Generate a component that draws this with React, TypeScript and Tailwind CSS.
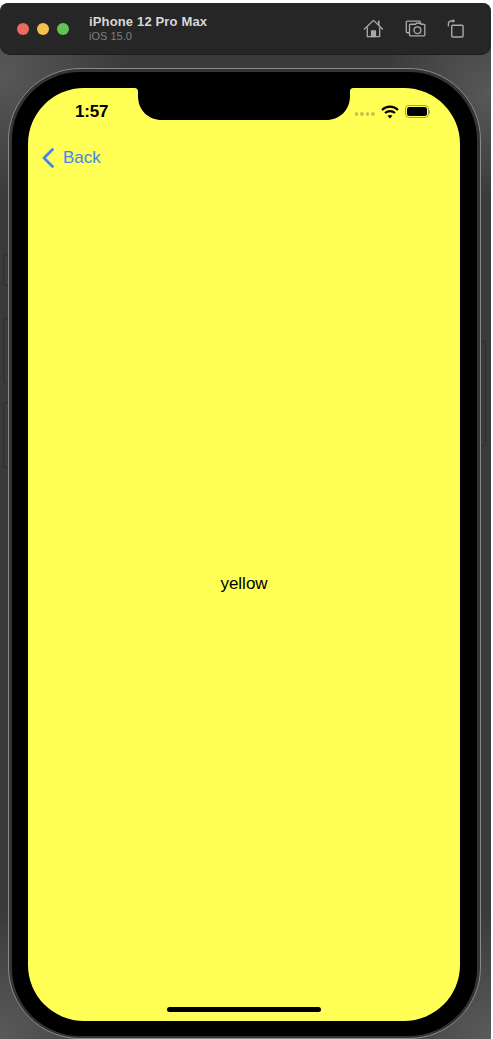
export default function App() {
  return (
    <div className="w-[493px] h-[1039px] bg-white overflow-hidden pt-[3px] font-['Liberation_Sans',sans-serif]">
      <div className="w-[491px] h-[1036px] flex flex-col overflow-hidden rounded-t-[8px] bg-[#3a3a3a] bg-[radial-gradient(circle_at_0px_70px,#585858_0,#3a3a3a_130px,transparent_131px),radial-gradient(circle_at_491px_90px,#585858_0,#3a3a3a_110px,transparent_111px),radial-gradient(circle_at_491px_1036px,#5a5a5a_0,#3a3a3a_130px,transparent_131px),radial-gradient(circle_at_0px_1036px,#5a5a5a_0,#3a3a3a_130px,transparent_131px)]">
        <header className="h-[52px] shrink-0 bg-[#262626] rounded-b-[10px] rounded-t-[8px] border-b border-[#1d1d1d] flex items-center pl-[17px] pr-[27px]">
          <div className="flex gap-[8px] w-[72px] shrink-0">
            <span className="w-[12px] h-[12px] rounded-full bg-[#ec6a5e]" />
            <span className="w-[12px] h-[12px] rounded-full bg-[#f4bf4f]" />
            <span className="w-[12px] h-[12px] rounded-full bg-[#61c554]" />
          </div>
          <div className="flex flex-col flex-1 -mt-[1px]">
            <span className="text-[13px] leading-[16px] font-bold text-[#d8d8d8] tracking-[0.15px]">iPhone 12 Pro Max</span>
            <span className="text-[11px] leading-[13px] text-[#808080]">iOS 15.0</span>
          </div>
          <div className="flex items-center gap-[21px] text-[#a9a9a9]">
            <svg width="21" height="21" viewBox="0 0 22 22" fill="none" stroke="currentColor" strokeWidth="1.4" strokeLinejoin="round" strokeLinecap="round">
              <path d="M1.5 11.5 L11 2.5 L20.5 11.5" />
              <path d="M16.5 7.5 V3.5" strokeWidth="1.7" />
              <path d="M4.5 10 V19.5 H17.5 V10" />
              <path d="M9 19.5 V13.5 H13 V19.5 Z" fill="currentColor" />
            </svg>
            <svg width="21" height="19" viewBox="0 0 22 20" fill="none" stroke="currentColor" strokeWidth="1.4" strokeLinejoin="round">
              <path d="M4.5 14.5 H2.5 a1.2 1.2 0 0 1-1.2-1.2 V3.5 a1.2 1.2 0 0 1 1.2-1.2 H15 a1.2 1.2 0 0 1 1.2 1.2 V5" />
              <path d="M6 5.5 H11 L12 4.5 H16 L17 5.5 H19.5 a1.3 1.3 0 0 1 1.3 1.3 V16.5 a1.3 1.3 0 0 1-1.3 1.3 H6 a1.3 1.3 0 0 1-1.3-1.3 V6.8 A1.3 1.3 0 0 1 6 5.5 Z" />
              <circle cx="13" cy="11.8" r="3.6" />
            </svg>
            <svg width="17" height="21" viewBox="0 0 18 22" fill="none" stroke="currentColor" strokeWidth="1.5" strokeLinecap="round">
              <rect x="5" y="7.5" width="12" height="12.5" rx="1.2" />
              <path d="M1.5 8 V6 a3 3 0 0 1 3-3 H6" />
              <path d="M6 0.8 L8.6 3 L6 5.2 Z" fill="currentColor" stroke="none" />
            </svg>
          </div>
        </header>
        <main className="flex-1 pt-[13px] pl-[8px]">
          <div className="relative w-[473px] h-[971px] rounded-[72px] border-[1.5px] border-[#8a8a8a] bg-[#343434] p-[3px] pb-[2px]">
            <span className="absolute -left-[6px] top-[185px] w-[5px] h-[32px] rounded-l-[2px] border border-r-0 border-[#2e2e2e]" />
            <span className="absolute -left-[6px] top-[249px] w-[5px] h-[65px] rounded-l-[2px] border border-r-0 border-[#2e2e2e]" />
            <span className="absolute -left-[6px] top-[333px] w-[5px] h-[66px] rounded-l-[2px] border border-r-0 border-[#2e2e2e]" />
            <span className="absolute -right-[6px] top-[272px] w-[5px] h-[105px] rounded-r-[2px] border border-l-0 border-[#2e2e2e]" />
            <div className="w-full h-full rounded-[68px] bg-black pt-[16px] pl-[16px]">
              <div className="relative w-[432px] h-[933px] rounded-[56px] bg-[#ffff55] flex flex-col overflow-hidden text-black">
                <svg className="absolute left-[106px] top-0" width="220" height="32" viewBox="0 0 220 32" fill="#000">
                  <path d="M0 0 H220 C217 0 216 1 216 4 V8 C216 22 206 32 192 32 H28 C14 32 4 22 4 8 V4 C4 1 3 0 0 0 Z" />
                </svg>
                <div className="h-[48px] shrink-0 flex items-center justify-between pl-[47px] pr-[30px]">
                  <span className="text-[17px] font-bold tracking-[-0.2px]">1:57</span>
                  <div className="flex items-center mt-[-1px]">
                    <div className="flex gap-[2px] mt-[5px] mr-[6px]">
                      <span className="w-[3.5px] h-[3.5px] rounded-full bg-[#c4c44c]" />
                      <span className="w-[3.5px] h-[3.5px] rounded-full bg-[#c4c44c]" />
                      <span className="w-[3.5px] h-[3.5px] rounded-full bg-[#c4c44c]" />
                      <span className="w-[3.5px] h-[3.5px] rounded-full bg-[#c4c44c]" />
                    </div>
                    <svg width="18" height="14" viewBox="0 0 18 14" fill="none" stroke="#000" strokeWidth="2.2" className="mr-[6px]">
                      <path d="M1 5 C5.5 0.6 12.5 0.6 17 5" />
                      <path d="M4 8 C6.8 5.5 11.2 5.5 14 8" />
                      <path d="M9 13.5 L6.6 10.8 C8 9.8 10 9.8 11.4 10.8 Z" fill="#000" stroke="none" />
                    </svg>
                    <div className="flex items-center">
                      <div className="w-[24px] h-[13px] rounded-[4px] border border-[#a3a33e] p-[1px]">
                        <div className="w-full h-full rounded-[2.5px] bg-black" />
                      </div>
                      <span className="w-[1.5px] h-[4px] rounded-r-full bg-[#a3a33e]" />
                    </div>
                  </div>
                </div>
                <div className="h-[44px] shrink-0 flex items-center pl-[14px] text-[#3f87ee]">
                  <svg width="12" height="20" viewBox="0 0 12 20" fill="none" stroke="currentColor" strokeWidth="2.8" strokeLinecap="round" strokeLinejoin="round">
                    <path d="M10.5 1.5 L2 10 L10.5 18.5" />
                  </svg>
                  <span className="ml-[9px] text-[17px]">Back</span>
                </div>
                <div className="flex-1 flex items-center justify-center pb-[33px]">
                  <span className="text-[17px]">yellow</span>
                </div>
                <span className="absolute left-[139px] bottom-[9px] w-[154px] h-[5px] rounded-full bg-black" />
              </div>
            </div>
          </div>
        </main>
      </div>
    </div>
  );
}
